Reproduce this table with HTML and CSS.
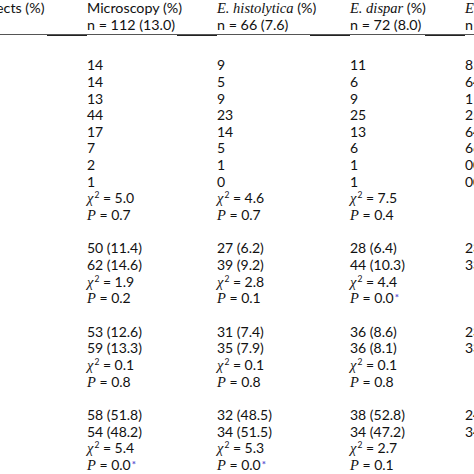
FILE: index.html
```html
<!DOCTYPE html>
<html>
<head>
<meta charset="utf-8">
<link rel="stylesheet" href="styles.css">
</head>
<body>
<div class="table">
  <div class="row head">
    <div>Subjects (%)</div>
    <div>Microscopy (%)</div>
    <div><i>E. histolytica</i> (%)</div>
    <div><i>E. dispar</i> (%)</div>
    <div><i>E. moshkovskii</i> (%)</div>
  </div>
  <div class="row head">
    <div></div>
    <div>n = 112 (13.0)</div>
    <div>n = 66 (7.6)</div>
    <div>n = 72 (8.0)</div>
    <div>n = 16 (1.8)</div>
  </div>
  <div class="rule"><span></span><span></span><span></span><span></span><span></span></div>
  <div class="body">
    <div class="row"><div></div><div>14</div><div>9</div><div>11</div><div>85</div></div>
    <div class="row"><div></div><div>14</div><div>5</div><div>6</div><div>64</div></div>
    <div class="row"><div></div><div>13</div><div>9</div><div>9</div><div>1 </div></div>
    <div class="row"><div></div><div>44</div><div>23</div><div>25</div><div>25</div></div>
    <div class="row"><div></div><div>17</div><div>14</div><div>13</div><div>64</div></div>
    <div class="row"><div></div><div>7</div><div>5</div><div>6</div><div>66</div></div>
    <div class="row"><div></div><div>2</div><div>1</div><div>1</div><div>00</div></div>
    <div class="row"><div></div><div>1</div><div>0</div><div>1</div><div>00</div></div>
    <div class="row"><div></div><div><i>χ</i><sup>2</sup> = 5.0</div><div><i>χ</i><sup>2</sup> = 4.6</div><div><i>χ</i><sup>2</sup> = 7.5</div><div></div></div>
    <div class="row"><div></div><div><i>P</i> = 0.7</div><div><i>P</i> = 0.7</div><div><i>P</i> = 0.4</div><div></div></div>
    <div class="gap"></div>
    <div class="row"><div></div><div>50 (11.4)</div><div>27 (6.2)</div><div>28 (6.4)</div><div>23</div></div>
    <div class="row"><div></div><div>62 (14.6)</div><div>39 (9.2)</div><div>44 (10.3)</div><div>33</div></div>
    <div class="row"><div></div><div><i>χ</i><sup>2</sup> = 1.9</div><div><i>χ</i><sup>2</sup> = 2.8</div><div><i>χ</i><sup>2</sup> = 4.4</div><div></div></div>
    <div class="row"><div></div><div><i>P</i> = 0.2</div><div><i>P</i> = 0.1</div><div><i>P</i> = 0.0<span class="star">*</span></div><div></div></div>
    <div class="gap"></div>
    <div class="row"><div></div><div>53 (12.6)</div><div>31 (7.4)</div><div>36 (8.6)</div><div>23</div></div>
    <div class="row"><div></div><div>59 (13.3)</div><div>35 (7.9)</div><div>36 (8.1)</div><div>33</div></div>
    <div class="row"><div></div><div><i>χ</i><sup>2</sup> = 0.1</div><div><i>χ</i><sup>2</sup> = 0.1</div><div><i>χ</i><sup>2</sup> = 0.1</div><div></div></div>
    <div class="row"><div></div><div><i>P</i> = 0.8</div><div><i>P</i> = 0.8</div><div><i>P</i> = 0.8</div><div></div></div>
    <div class="gap"></div>
    <div class="row"><div></div><div>58 (51.8)</div><div>32 (48.5)</div><div>38 (52.8)</div><div>24</div></div>
    <div class="row"><div></div><div>54 (48.2)</div><div>34 (51.5)</div><div>34 (47.2)</div><div>34</div></div>
    <div class="row"><div></div><div><i>χ</i><sup>2</sup> = 5.4</div><div><i>χ</i><sup>2</sup> = 5.3</div><div><i>χ</i><sup>2</sup> = 2.7</div><div></div></div>
    <div class="row"><div></div><div><i>P</i> = 0.0<span class="star">*</span></div><div><i>P</i> = 0.0<span class="star">*</span></div><div><i>P</i> = 0.1</div><div></div></div>
  </div>
</div>
</body>
</html>
```

FILE: styles.css
```css
html, body {
  margin: 0;
  padding: 0;
  background: #ffffff;
  overflow: hidden;
  width: 474px;
  height: 474px;
}
.table {
  margin: -1px 0 0 -31px;
  font-family: Lato, "Open Sans", sans-serif;
  font-size: 14px;
  color: #111111;
  width: 640px;
}
.row, .rule {
  display: grid;
  grid-template-columns: 118px 130px 133px 115px 147px;
}
.row {
  height: 16.67px;
  line-height: 16.67px;
  white-space: nowrap;
}
.head {
  height: 17px;
  line-height: 17px;
  font-size: 14.3px;
}
.head i {
  font-family: "Liberation Serif", serif;
  font-size: 14.6px;
}
.row i {
  font-family: "Liberation Serif", serif;
  font-size: 14.5px;
}
sup {
  font-size: 8.5px;
  line-height: 0;
  vertical-align: 5px;
  margin-left: 1px;
}
.star {
  color: #5a4fd0;
  font-size: 10px;
  font-weight: bold;
  vertical-align: 2px;
  line-height: 0;
  margin-left: 1px;
}
.rule {
  margin-top: 0.5px;
  height: 2px;
}
.rule span {
  display: flex;
  justify-content: flex-end;
  border-top: 1px solid #555;
  height: 1px;
}
.rule span::after {
  content: "";
  width: 40px;
  height: 1px;
  background: #222;
}
.rule span:last-child::after {
  display: none;
}
.body {
  padding-top: 21.7px;
}
.gap {
  height: 16.67px;
}
```
